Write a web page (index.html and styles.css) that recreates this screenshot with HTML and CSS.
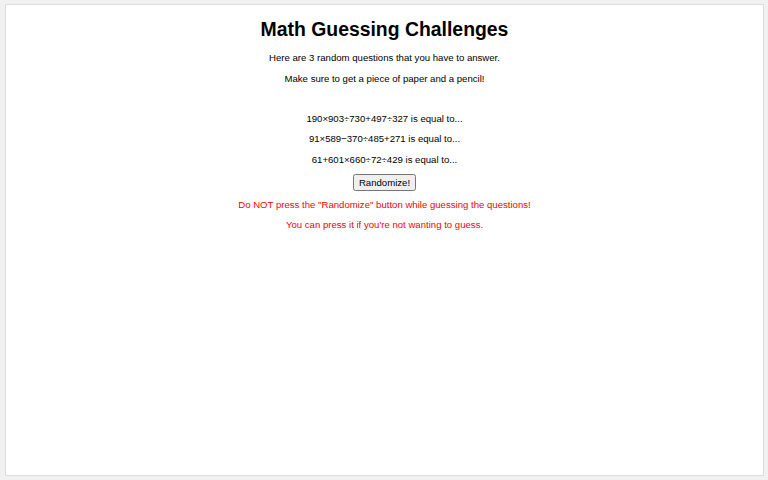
FILE: index.html
```html
<!DOCTYPE html>
<html>
<head>
<meta charset="utf-8">
<title>Math Guessing Challenges</title>
<link rel="stylesheet" href="styles.css">
</head>
<body>
<main class="card">
  <h1 class="title">Math Guessing Challenges</h1>
  <p class="line">Here are 3 random questions that you have to answer.</p>
  <p class="line">Make sure to get a piece of paper and a pencil!</p>
  <div class="questions">
    <p class="line">190×903÷730+497÷327 is equal to...</p>
    <p class="line">91×589−370÷485+271 is equal to...</p>
    <p class="line">61+601×660÷72÷429 is equal to...</p>
  </div>
  <button class="btn" type="button">Randomize!</button>
  <p class="line warn">Do NOT press the "Randomize" button while guessing the questions!</p>
  <p class="line warn">You can press it if you're not wanting to guess.</p>
</main>
</body>
</html>
```
FILE: styles.css
```css
html, body {
  margin: 0;
  height: 100%;
}
body {
  background: #f1f1f1;
  font-family: "Liberation Sans", Arial, sans-serif;
  padding: 4px 4px 4px 5px;
  box-sizing: border-box;
}
.card {
  background: #fff;
  border: 1px solid #dcdcdc;
  height: 100%;
  box-sizing: border-box;
  display: flex;
  flex-direction: column;
  align-items: center;
  padding-top: 13px;
}
.title {
  font-size: 19.4px;
  font-weight: bold;
  margin: 0 0 11px;
  color: #000;
}
.line {
  font-size: 9.6px;
  margin: 0 0 9.5px;
  line-height: 11px;
  color: #000;
}
.questions {
  display: flex;
  flex-direction: column;
  align-items: center;
  margin-top: 19.5px;
}
.questions .line {
  margin-bottom: 9.8px;
}
.btn {
  font-family: "Liberation Sans", Arial, sans-serif;
  font-size: 9.6px;
  padding: 1px 4px;
  margin: -1px 0 7.8px;
}
.warn {
  color: #f00;
  margin-bottom: 9.2px;
}
```
